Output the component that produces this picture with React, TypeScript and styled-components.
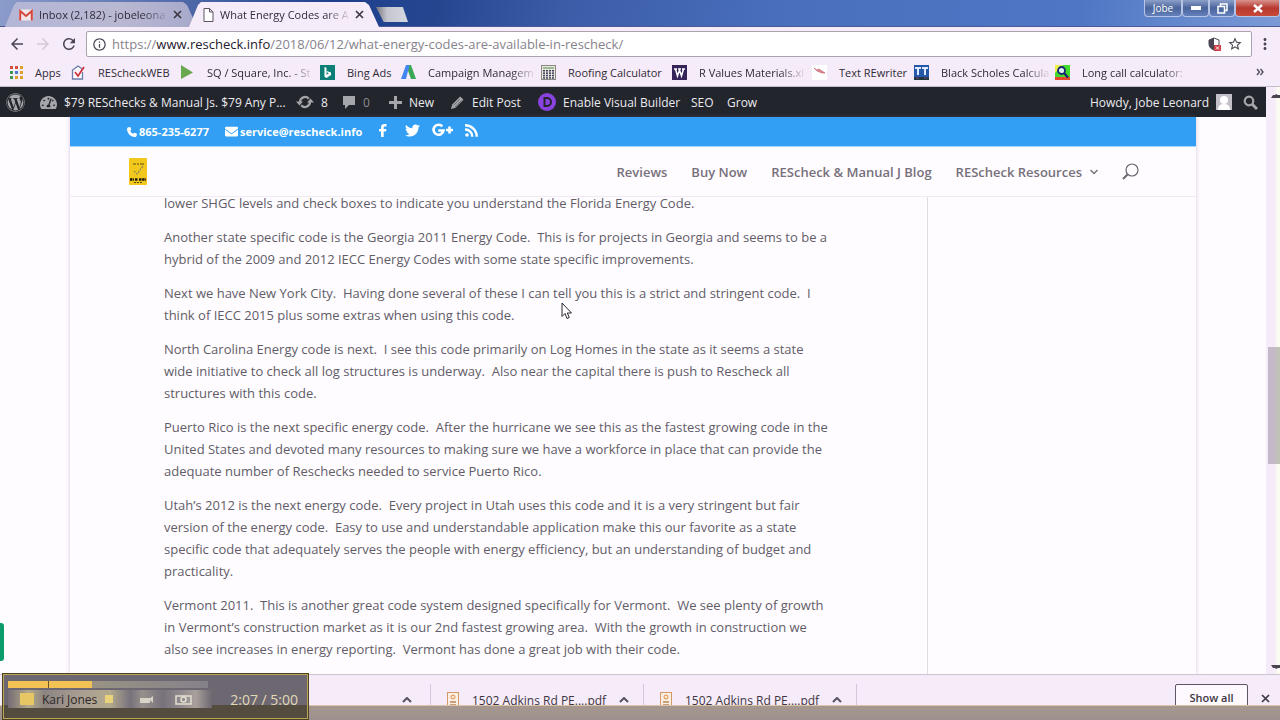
import React from "react";
import styled, { createGlobalStyle } from "styled-components";
import { FaWordpress, FaTachometerAlt, FaTwitter, FaEnvelope } from "react-icons/fa";
import { MdArrowBack, MdArrowForward, MdRefresh, MdInfoOutline, MdStarBorder, MdMoreVert } from "react-icons/md";

const GlobalStyle = createGlobalStyle`
  * { box-sizing: border-box; }
  body { margin: 0; overflow: hidden; font-family: "Open Sans", "Noto Sans", sans-serif; }
  button, input { font: inherit; color: inherit; }
  button { padding: 0; border: 0; background: none; }
  a { color: inherit; text-decoration: none; }
`;

const Window = styled.div`
  position: relative;
  display: flex;
  flex-direction: column;
  height: 100vh;
  overflow: hidden;
  background: #fefcff;
`;

/* ---------- title bar ---------- */
const TitleBar = styled.div`
  display: flex;
  flex: none;
  height: 27px;
  padding: 2px 0 0 5px;
  background: linear-gradient(100deg, #8c9ccb 0, #1e3f8c 26%, #25468f 34%, #3c5ca8 44%, #4a70bd 62%, #4e76c4 84%, #7b9ad6 100%);
  border-bottom: 1px solid #4a5a94;
`;

const Tab = styled.div<{ $active?: boolean; $width: number }>`
  display: flex;
  align-items: center;
  flex: none;
  width: ${(p) => p.$width}px;
  height: 25px;
  margin-right: ${(p) => (p.$active ? 0 : -8)}px;
  padding: 0 15px 0 14px;
  gap: 6px;
  font-size: 11px;
  color: #2f2b3a;
  position: relative;
  z-index: ${(p) => (p.$active ? 2 : 1)};
  background: ${(p) => (p.$active ? "#f6ebf8" : "linear-gradient(90deg, #b3b6d6, #b9b8d2 60%, #a7a9cb)")};
  clip-path: polygon(0 100%, 9px 3px, 12px 0, calc(100% - 14px) 0, calc(100% - 10px) 3px, 100% 100%);
`;

const FadeText = styled.span<{ $fade?: boolean }>`
  flex: 1;
  white-space: nowrap;
  mask-image: ${(p) => (p.$fade ? "linear-gradient(90deg, #000 calc(100% - 24px), rgba(0, 0, 0, 0.1))" : "none")};
`;

const IconButton = styled.button`
  display: flex;
  flex: none;
  align-items: center;
  justify-content: center;
`;

const NewTab = styled.button`
  width: 32px;
  height: 15px;
  margin: 5px 0 0 -3px;
  background: linear-gradient(90deg, #77747c, #c5c6cf 35%, #d6d8e0);
  clip-path: polygon(0 0, 84% 0, 100% 100%, 24% 100%);
`;

const WindowControls = styled.div`
  display: flex;
  height: 17px;
  margin: -2px 0 0 auto;
  color: #fff;
  font-size: 10px;
`;

const ControlButton = styled.button<{ $width: number; $close?: boolean }>`
  display: flex;
  align-items: center;
  justify-content: center;
  width: ${(p) => p.$width}px;
  border: 1px solid #b6c4e6;
  border-top: 0;
  border-radius: 0 0 4px 4px;
  color: #fff;
  background: ${(p) => (p.$close ? "linear-gradient(#d8938c, #b8382f 50%, #c84a3a)" : "linear-gradient(#8c9fca, #4a649c 50%, #6480ba)")};
`;

/* ---------- toolbar ---------- */
const Toolbar = styled.div`
  display: flex;
  align-items: center;
  flex: none;
  height: 34px;
  padding: 0 6px 0 8px;
  background: #f6ebf8;
  color: #4c4654;
`;

const NavButton = styled(IconButton)`
  width: 18px;
  height: 18px;
  margin-right: 8px;
  font-size: 18px;
`;

const AddressBox = styled.div`
  display: flex;
  align-items: center;
  flex: 1;
  height: 26px;
  padding: 0 8px 0 5px;
  gap: 5px;
  margin-right: 4px;
  background: #fff;
  border: 1px solid #aaa2ae;
  border-radius: 2px;
`;

const Address = styled.a`
  flex: 1;
  font-size: 13px;
  color: #87828c;
  b { font-weight: 400; color: #25202c; }
`;

const Bookmarks = styled.nav`
  display: flex;
  align-items: center;
  justify-content: space-between;
  flex: none;
  height: 26px;
  padding: 0 16px 3px 8px;
  background: #f6ebf8;
  border-bottom: 1px solid #c6bccb;
  font-size: 11px;
  color: #2f2b36;
`;

const BookmarkList = styled.div`
  display: flex;
`;

const Bookmark = styled.a<{ $width: number }>`
  display: flex;
  align-items: center;
  flex: none;
  gap: 12px;
  width: ${(p) => p.$width}px;
  padding-right: 8px;
  svg { flex: none; }
`;

/* ---------- page viewport ---------- */
const Viewport = styled.div`
  display: flex;
  flex: 1;
  min-height: 0;
`;

const Page = styled.div`
  display: flex;
  flex-direction: column;
  flex: 1;
  min-width: 0;
  overflow: hidden;
`;

const AdminBar = styled.div`
  display: flex;
  align-items: center;
  flex: none;
  height: 30px;
  padding: 0 8px 0 6px;
  background: #22252b;
  color: #eceaf0;
  font-size: 12px;
`;

const AdminItem = styled.a<{ $width?: number; $right?: boolean }>`
  display: flex;
  align-items: center;
  flex: none;
  gap: 7px;
  width: ${(p) => (p.$width ? `${p.$width}px` : "auto")};
  margin-left: ${(p) => (p.$right ? "auto" : 0)};
  white-space: nowrap;
  svg { flex: none; color: #a5a6ab; }
`;

const Muted = styled.span`
  color: #8c8e94;
`;

const Avatar = styled.svg`
  background: #c4c0c9;
`;

const Site = styled.div`
  display: flex;
  flex-direction: column;
  flex: 1;
  min-height: 0;
  margin: 0 70px;
  box-shadow: 0 0 4px rgba(150, 90, 160, 0.35);
  background: #fefcff;
`;

const ContactBar = styled.div`
  display: flex;
  align-items: center;
  flex: none;
  height: 30px;
  padding: 0 57px;
  background: #329ff5;
  border-bottom: 1px solid #a9d4fb;
  color: #fff;
  font-size: 11px;
  font-weight: 700;
`;

const Contact = styled.a<{ $width: number }>`
  display: flex;
  align-items: center;
  gap: 2px;
  width: ${(p) => p.$width}px;
`;

const Social = styled.a`
  display: flex;
  justify-content: center;
  width: 30px;
  height: 18px;
`;

const SiteHeader = styled.header`
  position: relative;
  z-index: 1;
  display: flex;
  align-items: center;
  flex: none;
  height: 50px;
  padding: 0 57px 0 58px;
  background: #fefcff;
  border-bottom: 1px solid #f1e9f3;
`;

const Menu = styled.nav`
  display: flex;
  align-items: center;
  gap: 24px;
  margin-left: auto;
  font-size: 13px;
  font-weight: 600;
  color: #77707b;
`;

const MenuLink = styled.a`
  display: flex;
  align-items: center;
  gap: 8px;
`;

const Columns = styled.div`
  display: flex;
  flex: 1;
  min-height: 0;
`;

const Article = styled.main`
  flex: 0 1 858px;
  margin-top: -5px;
  padding-left: 94px;
  border-right: 1px solid #e3dae6;
  overflow: hidden;
  font-size: 13px;
  line-height: 22px;
  color: #625c68;
`;

const Paragraph = styled.p`
  margin: 0 0 12px;
  white-space: pre;
`;

const ScrollTrack = styled.div`
  display: flex;
  flex-direction: column;
  align-items: flex-end;
  justify-content: space-between;
  flex: none;
  width: 14px;
  padding: 6px 0 4px;
  background: linear-gradient(90deg, #f6ebf8 9px, #fbfcf1 11px);
`;

const ScrollThumb = styled.div`
  width: 12px;
  height: 117px;
  margin-top: 48px;
  background: linear-gradient(90deg, #c5b9c9 50%, #bfc1b9 75%);
`;

const ChatTab = styled.button`
  position: absolute;
  left: 0;
  top: 623px;
  width: 4px;
  height: 38px;
  border-radius: 0 3px 3px 0;
  background: #0c9b6b;
`;

/* ---------- downloads ---------- */
const Downloads = styled.footer`
  display: flex;
  flex: none;
  height: 46px;
  padding: 9px 8px 0 400px;
  border-top: 1px solid #cdc4d0;
  background: #f6ebf8;
  font-size: 12px;
  color: #3c3642;
`;

const Download = styled.div`
  display: flex;
  align-items: center;
  flex: none;
  width: 213px;
  height: 32px;
  padding: 0 17px 0 16px;
  gap: 13px;
  border-left: 1px solid #d3c8d8;
  svg { flex: none; }
`;

const Caret = styled.button`
  display: flex;
  align-items: center;
  justify-content: center;
  width: 14px;
  height: 32px;
  margin-right: 16px;
`;

const ShowAll = styled.button`
  width: 73px;
  height: 27px;
  margin: 0 10px 0 auto;
  border: 1px solid #5e5665;
  border-radius: 2px;
  background: #fdf9fe;
  font-size: 11px;
  font-weight: 600;
`;

const CloseBar = styled(IconButton)`
  width: 14px;
  height: 28px;
`;

const Taskbar = styled.div`
  position: absolute;
  left: 0;
  right: 0;
  bottom: 0;
  height: 15px;
  background: linear-gradient(#a69890, #9c918e);
  border-top: 1px solid #dcc3a5;
`;

const Recorder = styled.div`
  position: absolute;
  left: 2px;
  bottom: 0;
  display: flex;
  flex-direction: column;
  width: 307px;
  height: 47px;
  padding: 7px 5px 0;
  border: 1px solid #4c4325;
  box-shadow: inset 0 0 0 1px #b9a354;
  background: linear-gradient(#6d6771 31px, #554c40 31px);
`;

const Progress = styled.div`
  width: 200px;
  height: 7px;
  background: linear-gradient(90deg, #f2c254 40px, #6b5426 40px, #6b5426 41px, #f2c254 41px, #f2c254 84px, #9a9384 84px, #85818a);
`;

const RecorderRow = styled.div`
  display: flex;
  align-items: center;
  justify-content: space-between;
  height: 22px;
  padding-right: 5px;
  font-size: 14px;
  color: #e2dab4;
`;

const RecorderKeys = styled.div`
  display: flex;
  align-items: center;
  gap: 8px;
  width: 204px;
  height: 18px;
  padding-left: 12px;
  font-size: 12px;
  background: linear-gradient(90deg, #746d74, #b5a98c 10%, #8b8480 18%, #a89c92 34%, #b3a98e 50%, #77717c 60%, #98908c 66%, #77717c 76%, #a8a09c 92%, #6d6771);
  span { color: #2d2828; }
`;

const Pointer = styled.svg`
  position: absolute;
  left: 561px;
  top: 302px;
`;

const TabClose = ({ label }: { label: string }) => (
  <IconButton aria-label={label}>
    <svg width="9" height="9" viewBox="0 0 9 9" stroke="#3d3844" strokeWidth="1.700"><path d="m1 1 7 7M8 1 1 8" /></svg>
  </IconButton>
);
const Grid = () => (
  <svg width="15" height="15" viewBox="0 0 15 15">
    {["#d94f3d", "#d94f3d", "#e0a030", "#3f9a56", "#4a7cd0", "#e0a030", "#3f9a56", "#e0a030", "#e0a030"].map((c, i) => (
      <rect key={i} x={2 + (i % 3) * 5} y={1 + Math.floor(i / 3) * 5} width="3" height="3" fill={c} />
    ))}
  </svg>
);
const Check = () => (
  <svg width="15" height="15" viewBox="0 0 15 15" fill="none">
    <path d="M1 5.500 7 1l5 3.500M1.500 5.500v8.500h10V7" fill="#fdfbff" stroke="#6d7ca8" strokeWidth="1.300" />
    <path d="m4 7 3 4 6-9" stroke="#d0343c" strokeWidth="1.800" />
  </svg>
);
const Play = () => <svg width="15" height="15" viewBox="0 0 15 15"><path d="M1 0 13 7.500 1 14z" fill="#6aa84f" /></svg>;
const Bing = () => (
  <svg width="15" height="15" viewBox="0 0 15 15"><rect width="15" height="15" fill="#0c8076" /><path d="M4.500 2l2 .8v7L9 8.500 7.500 7.700 6.800 6l4.200 1.600v2.400L6.500 13l-2-1.200z" fill="#fff" /></svg>
);
const Adwords = () => (
  <svg width="15" height="15" viewBox="0 0 15 15"><path d="M5 0h5l5 14h-5z" fill="#3aa757" /><path d="M5 0h3.500L5 14H0z" fill="#4285f4" /></svg>
);
const Calc = () => (
  <svg width="15" height="15" viewBox="0 0 15 15">
    <rect x=".5" y=".5" width="14" height="14" fill="#e9e6dc" stroke="#8a8a80" />
    <rect x="2" y="2" width="11" height="2" fill="#9eb89a" />
    {[0, 1, 2, 3].flatMap((r) => [0, 1, 2, 3].map((c) => <rect key={`${r}${c}`} x={2 + c * 3} y={5 + r * 2.4} width="2" height="1.500" fill="#3b3f5e" />))}
  </svg>
);
const Wiki = () => (
  <svg width="15" height="15" viewBox="0 0 15 15"><rect width="15" height="15" fill="#35235a" /><path d="M2 4h3M6 4h3M10 4h3M3.500 4l2 7 2-6 2 6 2-7" stroke="#fff" strokeWidth="1.500" fill="none" /></svg>
);
const Rewriter = () => (
  <svg width="15" height="15" viewBox="0 0 15 15"><rect width="15" height="15" fill="#fff" /><path d="M2 3l3 2 2-1 6 4-3 0-5-2z" fill="#d88890" stroke="#c05a68" strokeWidth=".6" /></svg>
);
const Scholes = () => (
  <svg width="15" height="15" viewBox="0 0 15 15"><rect width="15" height="15" fill="#2458a8" /><path d="M1 3h6M8 3h6M4 3v7M11 3v7" stroke="#dfe9ff" strokeWidth="2" /><path d="M0 13.500h15" stroke="#233a3c" strokeWidth="3" /><path d="M2 13h3M10 13h3" stroke="#7a4088" /></svg>
);
const Magnify = () => (
  <svg width="15" height="15" viewBox="0 0 15 15"><rect width="15" height="15" fill="#3fdc2c" /><path d="M0 0h8L0 8z" fill="#e9f04a" /><path d="M0 12h15v3H0z" fill="#e8482c" /><circle cx="6.500" cy="5.500" r="3.500" fill="#d8f4f8" stroke="#1c2470" strokeWidth="1.800" /><path d="m9 8 4 4.500" stroke="#1c2470" strokeWidth="2.200" /></svg>
);
const Gmail = () => (
  <svg width="14" height="12" viewBox="0 0 14 12"><rect width="14" height="11" y=".5" rx="1" fill="#efe6ea" /><path d="M1.200 11.500V2L7 7l5.800-5v9.500" fill="none" stroke="#d5473c" strokeWidth="2" /></svg>
);
const Doc = () => (
  <svg width="11" height="14" viewBox="0 0 11 14" fill="#fff" stroke="#5d5763"><path d="M1 .5h5.500L10 4v9.500H1zM6.500.5V4H10" /></svg>
);
const PdfFile = () => (
  <svg width="12" height="17" viewBox="0 0 12 17" fill="none"><rect x=".5" y=".5" width="11" height="16" fill="#fbeee4" stroke="#d29a64" /><circle cx="6" cy="5" r="2" stroke="#e08a3a" /><path d="M3 10h6M3 13h6" stroke="#b98458" strokeWidth="1.500" /></svg>
);
const Up = () => <svg width="10" height="6" viewBox="0 0 10 6"><path d="m1 5 4-4 4 4" fill="none" stroke="#5a5260" strokeWidth="2" /></svg>;
const UpdateArrows = () => (
  <svg width="18" height="14" viewBox="0 0 18 14" fill="none" stroke="currentColor" strokeWidth="2.200">
    <path d="M4 7a5 5 0 0 1 8.800-3.200M14 7a5 5 0 0 1-8.800 3.200" />
    <path d="M0 6.500h7L3.500 10.500zM11 7.500h7L14.500 3.500z" fill="currentColor" stroke="none" />
  </svg>
);

const bookmarks: [string, React.FC, number, boolean][] = [
  ["Apps", Grid, 63, false],
  ["REScheckWEB", Check, 109, false],
  ["SQ / Square, Inc. - St", Play, 140, true],
  ["Bing Ads", Bing, 81, false],
  ["Campaign Managem", Adwords, 140, true],
  ["Roofing Calculator", Calc, 131, false],
  ["R Values Materials.xl", Wiki, 140, true],
  ["Text REwriter", Rewriter, 102, false],
  ["Black Scholes Calcula", Scholes, 141, true],
  ["Long call calculator:", Magnify, 140, true],
];

const paragraphs = [
  "lower SHGC levels and check boxes to indicate you understand the Florida Energy Code.",
  "Another state specific code is the Georgia 2011 Energy Code.  This is for projects in Georgia and seems to be a\nhybrid of the 2009 and 2012 IECC Energy Codes with some state specific improvements.",
  "Next we have New York City.  Having done several of these I can tell you this is a strict and stringent code.  I\nthink of IECC 2015 plus some extras when using this code.",
  "North Carolina Energy code is next.  I see this code primarily on Log Homes in the state as it seems a state\nwide initiative to check all log structures is underway.  Also near the capital there is push to Rescheck all\nstructures with this code.",
  "Puerto Rico is the next specific energy code.  After the hurricane we see this as the fastest growing code in the\nUnited States and devoted many resources to making sure we have a workforce in place that can provide the\nadequate number of Reschecks needed to service Puerto Rico.",
  "Utah’s 2012 is the next energy code.  Every project in Utah uses this code and it is a very stringent but fair\nversion of the energy code.  Easy to use and understandable application make this our favorite as a state\nspecific code that adequately serves the people with energy efficiency, but an understanding of budget and\npracticality.",
  "Vermont 2011.  This is another great code system designed specifically for Vermont.  We see plenty of growth\nin Vermont’s construction market as it is our 2nd fastest growing area.  With the growth in construction we\nalso see increases in energy reporting.  Vermont has done a great job with their code.",
];

export default function App() {
  return (
    <Window>
      <GlobalStyle />
      <TitleBar>
        <Tab $width={192}>
          <Gmail />
          <FadeText $fade>Inbox (2,182) - jobeleona</FadeText>
          <TabClose label="Close Inbox tab" />
        </Tab>
        <Tab $active $width={190}>
          <Doc />
          <FadeText $fade>What Energy Codes are A</FadeText>
          <TabClose label="Close energy codes tab" />
        </Tab>
        <NewTab aria-label="New tab" />
        <WindowControls>
          <ControlButton $width={38}>Jobe</ControlButton>
          <ControlButton $width={27} aria-label="Minimize"><svg width="10" height="4"><rect width="10" height="4" fill="#fff" /></svg></ControlButton>
          <ControlButton $width={26} aria-label="Restore"><svg width="11" height="11" fill="none" stroke="#fff" strokeWidth="1.500"><path d="M3.500 3V1H10v6.500H8" /><rect x="1" y="3.500" width="6.500" height="6.500" /></svg></ControlButton>
          <ControlButton $width={45} $close aria-label="Close"><svg width="10" height="9" stroke="#fff" strokeWidth="2.500"><path d="m1 1 8 7M9 1 1 8" /></svg></ControlButton>
        </WindowControls>
      </TitleBar>

      <Toolbar>
        <NavButton aria-label="Back"><MdArrowBack /></NavButton>
        <NavButton aria-label="Forward" disabled><MdArrowForward color="#d3cad6" /></NavButton>
        <NavButton aria-label="Reload"><MdRefresh /></NavButton>
        <AddressBox>
          <MdInfoOutline size={15} />
          <Address href="#">https://<b>www.rescheck.info</b>/2018/06/12/what-energy-codes-are-available-in-rescheck/</Address>
          <svg width="14" height="15" viewBox="0 0 14 15"><path d="M6 1 11 3v4c0 3-2 5-5 6-3-1-5-3-5-6V3z" fill="#fff" stroke="#4c4654" /><path d="M6 1v12C3 12 1 10 1 7V3z" fill="#4c4654" /><rect x="6" y="8" width="7" height="6" fill="#cf3e48" /><path d="m8 9.500 3 3M11 9.500l-3 3" stroke="#fff" /></svg>
          <IconButton aria-label="Bookmark this page"><MdStarBorder size={16} /></IconButton>
        </AddressBox>
        <IconButton aria-label="Menu"><MdMoreVert size={18} /></IconButton>
      </Toolbar>

      <Bookmarks>
        <BookmarkList>
          {bookmarks.map(([label, Icon, width, fade]) => (
            <Bookmark key={label} href="#" $width={width}>
              <Icon />
              <FadeText $fade={fade}>{label}</FadeText>
            </Bookmark>
          ))}
        </BookmarkList>
        <IconButton aria-label="More bookmarks">
          <svg width="8" height="8" viewBox="0 0 8 8" fill="none" stroke="#4c4654" strokeWidth="1.300"><path d="m1 1 2.500 3L1 7M4.500 1 7 4 4.500 7" /></svg>
        </IconButton>
      </Bookmarks>

      <Viewport>
        <Page>
          <AdminBar>
            <AdminItem href="#" $width={34} aria-label="WordPress"><FaWordpress size={19} /></AdminItem>
            <AdminItem href="#" $width={256}><FaTachometerAlt size={17} />$79 RESchecks &amp; Manual Js. $79 Any P...</AdminItem>
            <AdminItem href="#" $width={46}><UpdateArrows />8</AdminItem>
            <AdminItem href="#" $width={47}>
              <svg width="14" height="15" viewBox="0 0 14 15"><path d="M1 1h12v9H7l-4 4v-4H1z" fill="currentColor" /></svg>
              <Muted>0</Muted>
            </AdminItem>
            <AdminItem href="#" $width={61}>
              <svg width="13" height="13" viewBox="0 0 13 13" stroke="currentColor" strokeWidth="3"><path d="M6.500 0v13M0 6.500h13" /></svg>
              New
            </AdminItem>
            <AdminItem href="#" $width={88}>
              <svg width="15" height="15" viewBox="0 0 15 15"><path d="M1 14l1.200-4.500 8-8 3.300 3.300-8 8z" fill="currentColor" /><path d="m3.500 10.500 6.500-6.500M5 12l6.500-6.500" stroke="#5c5e64" strokeWidth=".8" /></svg>
              Edit Post
            </AdminItem>
            <AdminItem href="#" $width={153}>
              <svg width="18" height="18" viewBox="0 0 18 18"><circle cx="9" cy="9" r="9" fill="#8a42e0" /><path d="M6.500 5H9a4 4 0 0 1 0 8H6.500z" fill="none" stroke="#22252b" strokeWidth="2" /></svg>
              Enable Visual Builder
            </AdminItem>
            <AdminItem href="#" $width={36}>SEO</AdminItem>
            <AdminItem href="#">Grow</AdminItem>
            <AdminItem href="#" $right $width={153}>
              Howdy, Jobe Leonard
              <Avatar width="16" height="16" viewBox="0 0 16 16"><circle cx="8" cy="6" r="4" fill="#fff" /><path d="M2 16c0-5 3-6 6-6s6 1 6 6z" fill="#fff" /></Avatar>
            </AdminItem>
            <AdminItem href="#" aria-label="Search">
              <svg width="15" height="15" viewBox="0 0 15 15" fill="none" stroke="currentColor"><circle cx="6" cy="6" r="4.300" strokeWidth="2.200" /><path d="m9 9 5 5" strokeWidth="3" /></svg>
            </AdminItem>
          </AdminBar>

          <Site>
            <ContactBar>
              <Contact href="#" $width={98}>
                <svg width="10" height="10" viewBox="0 0 10 10"><path d="M1.500.3 3.300 0 4.300 2.600 3.200 3.800C3.800 5.200 4.800 6.200 6.200 6.800L7.400 5.700 10 6.700 9.700 8.500C9.500 9.600 8.500 10 7.600 10 3.500 9.500.5 6.500 0 2.400 0 1.500.4.500 1.500.3z" fill="#fff" /></svg>
                865-235-6277
              </Contact>
              <Contact href="#" $width={142}><FaEnvelope size={13} />service@rescheck.info</Contact>
              <Social href="#" aria-label="Facebook">
                <svg width="9" height="15" viewBox="0 0 9 15"><path d="M8.500 1H6.500C4 1 3 2.500 3 4.500V6H1v2.500h2V14h2.700V8.500H8L8.400 6H5.700V4.700c0-.8.3-1.300 1.300-1.300h1.500z" fill="#fff" /></svg>
              </Social>
              <Social href="#" aria-label="Twitter"><FaTwitter size={15} /></Social>
              <Social href="#" aria-label="Google Plus">
                <svg width="22" height="15" viewBox="0 0 22 15" fill="none" stroke="#fff" strokeWidth="2.600"><path d="M11.300 3.400A5 5 0 1 0 12.500 7.500H7.300M15 7h7M18.500 3.500v7" /></svg>
              </Social>
              <Social href="#" aria-label="RSS">
                <svg width="14" height="15" viewBox="0 0 14 15" fill="none" stroke="#fff" strokeWidth="2.400"><circle cx="2" cy="12" r="1.800" fill="#fff" stroke="none" /><path d="M0 6.500a7 7 0 0 1 7.300 7.300M0 2.200a11.600 11.600 0 0 1 11.800 11.600" /></svg>
              </Social>
            </ContactBar>
            <SiteHeader>
              <svg width="20" height="28" viewBox="0 0 20 28" role="img" aria-label="Site logo">
                <rect x="1" width="18" height="27" rx="1" fill="#f3c81c" />
                <path d="M5 6h3M9 6h2M12 6h4" stroke="#5a4a14" />
                <path d="m6 13 3 3 6-8" fill="none" stroke="#8a8a58" strokeWidth="1.300" strokeDasharray="2 1" />
                <path d="M2 21.500h4M7 21.500h3M11 21.500h7" stroke="#1e1a10" strokeWidth="2.500" strokeDasharray="2.500 .6" />
                <path d="M6 24.500h8" stroke="#5a4a14" strokeDasharray="2 1" />
              </svg>
              <Menu>
                <MenuLink href="#">Reviews</MenuLink>
                <MenuLink href="#">Buy Now</MenuLink>
                <MenuLink href="#">REScheck &amp; Manual J Blog</MenuLink>
                <MenuLink href="#">REScheck Resources
                  <svg width="8" height="6" viewBox="0 0 8 6" fill="none" stroke="#77707b" strokeWidth="1.500"><path d="m.5 1 3.500 3.500L7.500 1" /></svg>
                </MenuLink>
                <IconButton aria-label="Search">
                  <svg width="17" height="17" viewBox="0 0 17 17" fill="none" stroke="#6c6570"><circle cx="10" cy="7" r="6" strokeWidth="1.200" /><path d="m5.500 11.500-4.500 4.500" strokeWidth="2" /></svg>
                </IconButton>
              </Menu>
            </SiteHeader>
            <Columns>
              <Article>
                {paragraphs.map((text) => <Paragraph key={text}>{text}</Paragraph>)}
              </Article>
            </Columns>
          </Site>
        </Page>
        <ScrollTrack>
          <svg width="9" height="5" viewBox="0 0 9 5"><path d="M0 5 2 2h2l1-1 2 1h2v3z" fill="#4a4350" /></svg>
          <ScrollThumb />
          <svg width="9" height="5" viewBox="0 0 9 5"><path d="M0 0h9v3H7L5 4 4 3H2z" fill="#4a4350" /></svg>
        </ScrollTrack>
      </Viewport>

      <Downloads>
        <Caret aria-label="Download options"><Up /></Caret>
        <Download><PdfFile /><FadeText>1502 Adkins Rd PE....pdf</FadeText><Up /></Download>
        <Download><PdfFile /><FadeText>1502 Adkins Rd PE....pdf</FadeText><Up /></Download>
        <Download />
        <ShowAll>Show all</ShowAll>
        <CloseBar aria-label="Close downloads">
          <svg width="9" height="9" viewBox="0 0 9 9" stroke="#3d3844" strokeWidth="1.700"><path d="m1 1 7 7M8 1 1 8" /></svg>
        </CloseBar>
      </Downloads>

      <Taskbar />
      <Recorder>
        <Progress />
        <RecorderRow>
          <RecorderKeys>
            <svg width="14" height="12"><rect width="14" height="12" fill="#e6c763" /></svg>
            <span>Kari Jones</span>
            <svg width="24" height="8"><rect width="8" height="8" fill="#e8d37c" /></svg>
            <svg width="30" height="10"><path d="M3 9V4h10v5M12 5l4-3v7" fill="#d9d3c8" /></svg>
            <svg width="18" height="12" fill="none" stroke="#e4ded2" strokeWidth="1.500"><rect x="1" y="3" width="15" height="8" /><circle cx="8.500" cy="6.500" r="2.500" /></svg>
          </RecorderKeys>
          2:07 / 5:00
        </RecorderRow>
      </Recorder>
      <ChatTab aria-label="Open chat" />
      <Pointer width="12" height="18" viewBox="0 0 12 18"><path d="M1 1v13.500l3-3 2 5 2.300-1-2-4.500H10.500z" fill="#fff" stroke="#2a2630" /></Pointer>
    </Window>
  );
}
